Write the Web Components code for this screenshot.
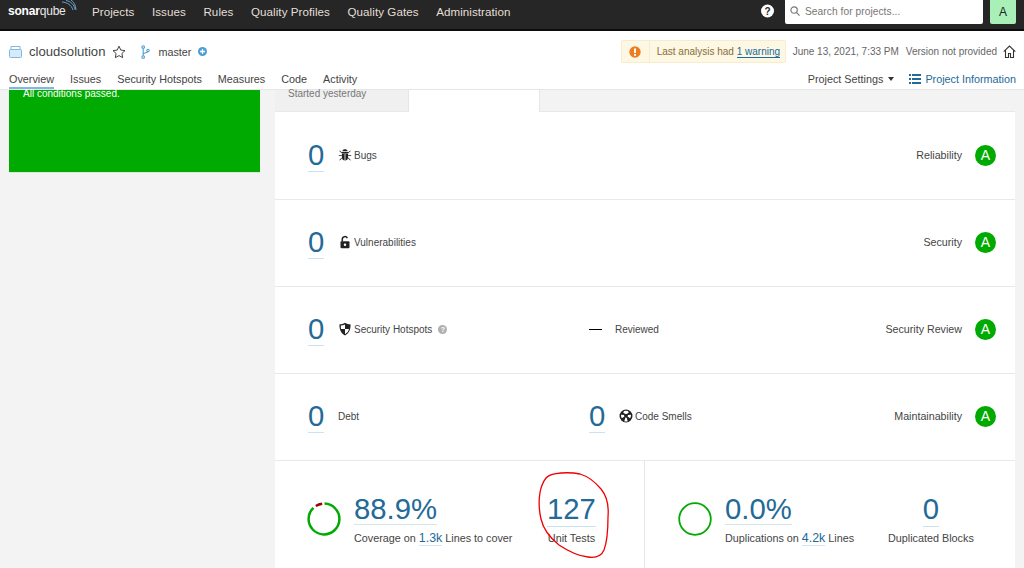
<!DOCTYPE html>
<html><head><meta charset="utf-8"><title>SonarQube</title>
<style>
html,body{margin:0;height:568px;overflow:hidden;background:#f3f3f3;font-family:"Liberation Sans",Arial,sans-serif;font-size:11.5px;color:#444}
sq-app{display:block}
</style></head><body>
<sq-app></sq-app>
<script>
const FONT='"Liberation Sans",Arial,sans-serif';
const ICONS={
 bug:'<svg width="14" height="14" viewBox="0 0 14 14" fill="#222"><path d="M4.4 3.2C4.6 1.8 5.7 1.2 7 1.2s2.4.6 2.6 2zM3.6 4h6.800v1.200H7.500v7.300h-1V5.200H3.600z"/><path d="M3.900 5.500h2.300v7a3 3 0 0 1-2.300-2.800zM7.800 5.500h2.300v4.200a3 3 0 0 1-2.300 2.800z"/><path d="M1.800 2.400l2.200 2-.5.500-2.200-2zM12.200 2.400l-2.200 2 .5.500 2.200-2zM.8 7.300h3v.8h-3zM10.200 7.300h3v.8h-3zM3.500 9.800l.5.500-2.200 2.200-.5-.6zM10.500 9.800l-.5.500 2.200 2.200.5-.6z"/></svg>',
 lock:'<svg width="14" height="14" viewBox="0 0 14 14"><path d="M4.300 6.500V4.200a2.600 2.600 0 0 1 5-1" fill="none" stroke="#222" stroke-width="1.500"/><rect x="2.500" y="6.300" width="9" height="7" rx="1" fill="#222"/><circle cx="7" cy="9.800" r="1.200" fill="#fff"/></svg>',
 shield:'<svg width="14" height="14" viewBox="0 0 14 14"><path d="M7 .8c1.700 1.100 3.500 1.500 5.600 1.600 0 5-1.300 8.800-5.600 11-4.300-2.200-5.600-6-5.600-11C3.500 2.300 5.300 1.900 7 .8z" fill="#222"/><path d="M7 2.400v4.700H3c-.1-1-.2-2-.2-3.500C4.300 3.400 5.700 3.100 7 2.400zM7 7.100h4c-.4 2.200-1.700 3.900-4 5.100z" fill="#fff"/></svg>',
 smell:'<svg width="14" height="14" viewBox="0 0 14 14"><circle cx="7" cy="7" r="6.500" fill="#222"/><path d="M5.300 1.800a5.500 5.500 0 0 1 3.400 0L7.600 5.400a1.900 1.900 0 0 0-1.200 0zM2 8.300a5.500 5.500 0 0 1 .9-3.600l2.500 1.900a1.900 1.900 0 0 0-.3 1.300zM12 8.300a5.500 5.500 0 0 0-.9-3.600L8.600 6.600a1.900 1.900 0 0 1 .3 1.300zM4.300 10.200l2.100-1.300h1.200l2.100 1.300-.7 1.700a5.500 5.500 0 0 1-4 0z" fill="#fff" transform="rotate(180 7 7)"/></svg>'
};
function def(name,html,extra){
 const t=document.createElement('template');t.innerHTML=html;
 customElements.define(name,class extends HTMLElement{
  constructor(){super();this.attachShadow({mode:'open'}).appendChild(t.content.cloneNode(true));}
  connectedCallback(){extra&&extra.call(this,this.shadowRoot);}
 });
}
def('sq-topbar',`<style>
:host{display:flex;align-items:stretch;height:29px;background:#262626;border-bottom:2px solid #0c0c0c;color:#e4dfd6;font:11.6px ${FONT};letter-spacing:.06px;position:relative}
.logo{position:relative;width:92px;flex:none;display:flex;align-items:center;padding-left:8px;box-sizing:border-box;color:#fff;font-size:12px;letter-spacing:-.2px;height:22px}
.logo b{font-weight:700}.logo span{font-weight:400;color:#e8e8e8}
.logo svg{position:absolute;left:60px;top:0}
nav{display:flex;gap:17.600px;height:22px;align-items:center}
.sp{flex:1}
.help{align-self:center;margin:-7px 11px 0 0;height:14px}
.search{width:198px;height:24px;background:#fff;border-radius:0 0 2px 2px;display:flex;align-items:center;gap:5px;padding:0 0 2px 5px;box-sizing:border-box;color:#777;font-size:10.200px;margin-right:7px}
.avatar{width:26px;height:24px;background:#a9f0b8;color:#222;font-size:12px;display:flex;align-items:center;justify-content:center;border-radius:0 0 2px 2px;margin-right:8px;letter-spacing:0}
</style>
<div class="logo"><b>sonar</b><span>qube</span><svg width="18" height="16" viewBox="0 0 18 16" fill="none" stroke="#6aa6cf"><path d="M2 2c5 .3 9.500 3 11 8" stroke-width="1"/><path d="M6 .5c4.500.8 8 3.500 9 9" stroke-width="1"/><path d="M11 .2c2.600 1.400 4.500 4.400 5 9.800" stroke-width="1"/></svg></div>
<nav><span>Projects</span><span>Issues</span><span>Rules</span><span>Quality Profiles</span><span>Quality Gates</span><span>Administration</span></nav>
<div class="sp"></div>
<svg class="help" width="13" height="13" viewBox="0 0 13 13"><circle cx="6.500" cy="6.500" r="6.500" fill="#fff"/><text x="6.500" y="10.200" text-anchor="middle" font-family="Liberation Sans" font-weight="700" font-size="10" fill="#262626">?</text></svg>
<div class="search"><svg width="10" height="10" viewBox="0 0 11 11" fill="none" stroke="#777" stroke-width="1.300"><circle cx="4.500" cy="4.500" r="3.500"/><path d="M7 7l3.500 3.500"/></svg><span>Search for projects...</span></div>
<div class="avatar">A</div>`);

def('sq-project-header',`<style>
:host{display:block;background:#fff;height:59px;box-sizing:border-box;border-bottom:1px solid #e6e6e6;color:#444;font:10.800px ${FONT}}
.r1{display:flex;align-items:center;height:41px;padding:0 8px 0 9px}
.r2{display:flex;align-items:center;height:17px;margin-top:-2px;padding:0 8px 0 9px;gap:16px;color:#444;position:relative}
.name{font-size:13.100px;margin-left:7px;color:#444}
.star{margin-left:7px}.branch{margin-left:15px}.master{margin-left:8px;font-size:10.800px}.plus{margin-left:7px}
.sp{flex:1}
.warn{display:flex;align-items:center;height:23px;width:165px;box-sizing:border-box;border:1px solid #faebcc;background:#fcf8e3;border-radius:2px;color:#8a6d3b;font-size:10px;white-space:nowrap}
.warn .i{width:27px;height:100%;display:flex;align-items:center;justify-content:center;border-right:1px solid #faebcc;flex:none}
.warn .t{padding-left:7px}.warn u{color:#236a97;text-decoration:none;border-bottom:1px solid #236a97}
.date{margin-left:7px;color:#666;font-size:10px;white-space:nowrap}.ver{margin-left:7px;color:#666;font-size:10px;white-space:nowrap}
.home{margin-left:6px}
.ov{position:relative}
.ov::after{content:"";position:absolute;left:0;right:0;bottom:-4px;height:2px;background:#7db9e0}
.set{display:flex;align-items:center;gap:5px}.caret{border:3px solid transparent;border-top:4px solid #333;border-bottom:0}
.info{display:flex;align-items:center;gap:4px;color:#236a97;margin-left:-1px}
</style>
<div class="r1">
<svg width="13" height="13" viewBox="0 0 13 13" fill="none" stroke="#7fb8e0"><rect x=".5" y="4.500" width="12" height="8" fill="#d6eafa" rx="1"/><path d="M2 4.500V1.500h9v3"/></svg>
<span class="name">cloudsolution</span>
<svg class="star" width="14" height="14" viewBox="0 0 14 14" fill="none" stroke="#444"><path d="M7 1.200l1.800 3.900 4.200.5-3.100 2.900.8 4.200L7 10.600l-3.700 2.100.8-4.200L1 5.600l4.200-.5z"/></svg>
<svg class="branch" width="9" height="14" viewBox="0 0 9 14" fill="none" stroke="#4b9fd5" stroke-width="1.100"><circle cx="2.200" cy="2" r="1.300"/><circle cx="2.200" cy="12" r="1.300"/><circle cx="7" cy="5.500" r="1.200"/><path d="M2.200 3.300v7.400M2.200 9C3 7.500 6 8 7 6.700"/></svg>
<span class="master">master</span>
<svg class="plus" width="9" height="9" viewBox="0 0 9 9"><circle cx="4.500" cy="4.500" r="4.500" fill="#4b9fd5"/><path d="M2 4.500h5M4.500 2v5" stroke="#fff" stroke-width="1.300"/></svg>
<div class="sp"></div>
<div class="warn"><span class="i"><svg width="12" height="12" viewBox="0 0 12 12"><circle cx="6" cy="6" r="5.700" fill="#ed7d20"/><rect x="5" y="2.500" width="2" height="4.500" fill="#fff"/><rect x="5" y="8" width="2" height="1.800" fill="#fff"/></svg></span><span class="t">Last analysis had <u>1 warning</u></span></div>
<span class="date">June 13, 2021, 7:33 PM</span><span class="ver">Version not provided</span>
<svg class="home" width="13" height="13" viewBox="0 0 13 13" fill="none" stroke="#333" stroke-width="1.100"><path d="M.7 6.700L6.500 1l5.800 5.700M2.500 5.500v7h3V8.500h2v4h3v-7"/></svg>
</div>
<div class="r2"><span class="ov">Overview</span><span>Issues</span><span>Security Hotspots</span><span>Measures</span><span>Code</span><span>Activity</span><span style="flex:1"></span><span class="set">Project Settings <i class="caret"></i></span><span class="info"><svg width="12" height="10" viewBox="0 0 12 10" fill="#236a97"><path d="M0 0h2v2H0zM3 0h9v2H3zM0 4h2v2H0zM3 4h9v2H3zM0 8h2v2H0zM3 8h9v2H3z"/></svg>Project Information</span></div>`);

def('sq-gate',`<style>
:host{display:block;box-sizing:border-box;width:251px;height:83px;background:#00aa00;color:#fff;font:10px/1 ${FONT};border-bottom:1px solid #d8e8d8;flex:none}
div{padding-left:14px;margin-top:-1px}
</style><div><slot></slot></div>`);

def('sq-tabs',`<style>
:host{display:flex;height:21px;flex:none}
.a{width:133px;background:#f0f0f0;box-sizing:border-box;color:#777;font:10px/1 ${FONT}}
.a span{display:block;margin:-1px 0 0 13px}
.b{width:132px;background:#fff;border-left:1px solid #e6e6e6;border-right:1px solid #e6e6e6;box-sizing:border-box;margin-bottom:-1px;position:relative;z-index:1}
</style><div class="a"><span><slot></slot></span></div><div class="b"></div>`);

def('sq-row',`<style>
:host{display:grid;grid-template-columns:281px 1fr auto;align-items:center;height:87px;box-sizing:border-box;border-bottom:1px solid #e8e8e8;padding:0 19px 2px 33px;font:10px ${FONT};color:#444}
.cell{display:flex;align-items:center}
.rating{display:flex;align-items:center;gap:13px;font-size:10.700px}
.badge{width:21px;height:21px;border-radius:50%;background:#00aa00;color:#fff;font-size:14px;display:flex;align-items:center;justify-content:center}
</style><div class="cell"><slot name="a"></slot></div><div class="cell"><slot name="b"></slot></div><div class="rating"><span class="lbl"></span><span class="badge">A</span></div>`,
function(s){s.querySelector('.lbl').textContent=this.getAttribute('rating');});

def('sq-measure',`<style>
:host{display:flex;align-items:center;font:10px ${FONT};color:#444}
.n{width:16px;text-align:center;font-size:29.300px;line-height:31px;color:#236a97;border-bottom:1px solid #cae3f2;padding-bottom:1px;margin-right:14px;position:relative}
.ic{display:flex;margin-right:2px;height:14px}
.l{display:flex;align-items:center;gap:6px}
.q{width:9px;height:9px;border-radius:50%;background:#b0b0b0;color:#fff;font:700 7px/9px ${FONT};text-align:center}
</style><span class="n"></span><span class="ic"></span><span class="l"><span class="t"></span></span>`,
function(s){
 s.querySelector('.n').textContent=this.getAttribute('value');
 const i=this.getAttribute('icon');const ic=s.querySelector('.ic');
 if(i)ic.innerHTML=ICONS[i];else ic.remove();
 s.querySelector('.t').textContent=this.getAttribute('label');
 if(this.hasAttribute('help')){const q=document.createElement('span');q.className='q';q.textContent='?';s.querySelector('.l').append(q);}
});

def('sq-dash',`<style>
:host{display:flex;align-items:center;font:10px ${FONT};color:#444;gap:13px}
i{display:block;width:13px;height:1px;background:#000}
</style><i></i><span><slot></slot></span>`);

def('sq-cov',`<style>
:host{display:flex;flex:1;box-sizing:border-box;height:107px;font:10.800px ${FONT};color:#444;align-items:flex-start;padding-top:32px;position:relative}
.don{flex:none;margin:9px 13px 0 0}
.big{font-size:29.300px;line-height:31px;color:#236a97;border-bottom:1px solid #d5e4ef;display:inline-block;padding-bottom:0}
.sub{margin-top:6px;white-space:nowrap}
.sub u{text-decoration:none;color:#236a97;font-size:12.400px;border-bottom:1px solid #d5e4ef}
.col{display:flex;flex-direction:column;align-items:flex-start}
.side{display:flex;flex-direction:column;align-items:center;position:absolute;top:32px}
.side .big{border-color:#cae3f2;padding-bottom:2px}
.side .sub{margin-top:5px}
</style><svg class="don" width="34" height="34" viewBox="0 0 34 34" fill="none"></svg><div class="col"><span class="big"></span><span class="sub"></span></div><div class="side"><span class="big"></span><span class="sub"></span></div>`,
function(s){
 const pct=+this.getAttribute('pct');const R=15.4;const C=2*Math.PI*R;const don=s.querySelector('.don');
 if(pct>0){const g=C*pct/100;don.innerHTML=`<circle cx="17" cy="17" r="${R}" stroke="#00aa00" stroke-width="2.500" stroke-dasharray="${g-2} ${C-g+2}" transform="rotate(-88 17 17)"/><circle cx="17" cy="17" r="${R}" stroke="#a00000" stroke-width="2.500" stroke-dasharray="${C-g-4} ${g+4}" transform="rotate(-122 17 17)"/>`;}
 else don.innerHTML=`<circle cx="17" cy="17" r="15.800" stroke="#00aa00" stroke-width="1.800"/>`;
 const bigs=s.querySelectorAll('.big'),subs=s.querySelectorAll('.sub');
 bigs[0].textContent=this.getAttribute('value');
 subs[0].innerHTML=`${this.getAttribute('pre')} <u>${this.getAttribute('num')}</u> ${this.getAttribute('post')}`;
 bigs[1].textContent=this.getAttribute('svalue');subs[1].textContent=this.getAttribute('slabel');
 s.querySelector('.side').style.cssText+=';'+this.getAttribute('sstyle');
});

def('sq-app',`<style>
:host{display:block;height:568px;overflow:hidden;position:relative}
.main{display:flex;height:478px;padding-left:9px;gap:15px;box-sizing:border-box;padding-right:9px}
.right{display:flex;flex-direction:column;flex:1;min-width:0}
.panel{background:#fff;flex:1;box-sizing:border-box;min-height:0;border-top:1px solid #e8e8e8;padding-top:1px}
.bottom{display:flex}
.bottom sq-cov:first-child{flex:none;width:370px;padding-left:32px;border-right:1px solid #e8e8e8}
.bottom sq-cov:last-child{padding-left:33px}
.mark{position:absolute;left:530px;top:465px}
</style>
<sq-topbar></sq-topbar><sq-project-header></sq-project-header>
<div class="main"><sq-gate>All conditions passed.</sq-gate>
<div class="right"><sq-tabs>Started yesterday</sq-tabs><div class="panel">
<sq-row rating="Reliability"><sq-measure slot="a" value="0" icon="bug" label="Bugs"></sq-measure></sq-row>
<sq-row rating="Security"><sq-measure slot="a" value="0" icon="lock" label="Vulnerabilities"></sq-measure></sq-row>
<sq-row rating="Security Review"><sq-measure slot="a" value="0" icon="shield" label="Security Hotspots" help></sq-measure><sq-dash slot="b">Reviewed</sq-dash></sq-row>
<sq-row rating="Maintainability"><sq-measure slot="a" value="0" label="Debt"></sq-measure><sq-measure slot="b" value="0" icon="smell" label="Code Smells"></sq-measure></sq-row>
<div class="bottom">
<sq-cov pct="88.9" value="88.9%" pre="Coverage on" num="1.3k" post="Lines to cover" svalue="127" slabel="Unit Tests" sstyle="left:272px"></sq-cov>
<sq-cov pct="0" value="0.0%" pre="Duplications on" num="4.2k" post="Lines" svalue="0" slabel="Duplicated Blocks" sstyle="left:243px"></sq-cov>
</div></div></div></div>
<svg class="mark" width="90" height="100" viewBox="530 465 90 100" fill="none" stroke="#f00000" stroke-width="1.300"><path d="M546 478C551 472 570 472 580 474C590 477 596 483 601 489C606 495 609 505 608 517C608 530 607 542 604 550C601 557 595 558 588 557C577 556 568 551 559 545C549 537 543 528 541 519C538 506 538 488 546 478Z"/></svg>`);
</script>
</body></html>
